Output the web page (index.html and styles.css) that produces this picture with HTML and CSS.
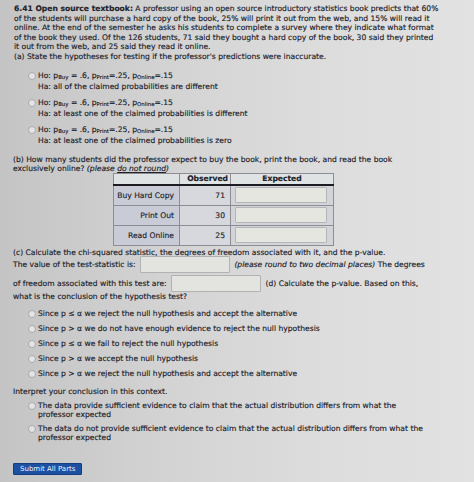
FILE: index.html
```html
<!DOCTYPE html>
<html>
<head>
<meta charset="utf-8">
<link rel="stylesheet" href="styles.css">
</head>
<body>
<div class="page">
  <p class="intro"><b>6.41 Open source textbook:</b> A professor using an open source introductory statistics book predicts that 60%<br>of the students will purchase a hard copy of the book, 25% will print it out from the web, and 15% will read it<br>online. At the end of the semester he asks his students to complete a survey where they indicate what format<br>of the book they used. Of the 126 students, 71 said they bought a hard copy of the book, 30 said they printed<br>it out from the web, and 25 said they read it online.<br>(a) State the hypotheses for testing if the professor's predictions were inaccurate.</p>

  <div class="hypos">
    <label class="hopt"><span class="radio"></span><span class="htext">Ho: p<sub>Buy</sub> = .6, p<sub>Print</sub>=.25, p<sub>Online</sub>=.15<br>Ha: all of the claimed probabilities are different</span></label>
    <label class="hopt"><span class="radio"></span><span class="htext">Ho: p<sub>Buy</sub> = .6, p<sub>Print</sub>=.25, p<sub>Online</sub>=.15<br>Ha: at least one of the claimed probabilities is different</span></label>
    <label class="hopt"><span class="radio"></span><span class="htext">Ho: p<sub>Buy</sub> = .6, p<sub>Print</sub>=.25, p<sub>Online</sub>=.15<br>Ha: at least one of the claimed probabilities is zero</span></label>
  </div>

  <p class="partb">(b) How many students did the professor expect to buy the book, print the book, and read the book<br>exclusively online? <i>(please <u>do not round</u>)</i></p>

  <table class="tbl">
    <thead>
      <tr><th class="c1"></th><th class="c2">Observed</th><th class="c3">Expected</th></tr>
    </thead>
    <tbody>
      <tr><td class="c1">Buy Hard Copy</td><td class="c2">71</td><td class="c3"><span class="box"></span></td></tr>
      <tr><td class="c1">Print Out</td><td class="c2">30</td><td class="c3"><span class="box"></span></td></tr>
      <tr><td class="c1">Read Online</td><td class="c2">25</td><td class="c3"><span class="box"></span></td></tr>
    </tbody>
  </table>

  <div class="partc">
    <div class="line">(c) Calculate the chi-squared statistic, the degrees of freedom associated with it, and the p-value.</div>
    <div class="line">The value of the test-statistic is: <span class="inbox"></span> <i>(please round to two decimal places)</i> The degrees</div>
    <div class="line l3">of freedom associated with this test are: <span class="inbox"></span> (d) Calculate the p-value. Based on this,</div>
    <div class="line">what is the conclusion of the hypothesis test?</div>
  </div>

  <div class="concl">
    <label class="copt"><span class="radio"></span>Since p ≤ α we reject the null hypothesis and accept the alternative</label>
    <label class="copt"><span class="radio"></span>Since p &gt; α we do not have enough evidence to reject the null hypothesis</label>
    <label class="copt"><span class="radio"></span>Since p ≤ α we fail to reject the null hypothesis</label>
    <label class="copt"><span class="radio"></span>Since p &gt; α we accept the null hypothesis</label>
    <label class="copt"><span class="radio"></span>Since p &gt; α we reject the null hypothesis and accept the alternative</label>
  </div>

  <div class="interp">Interpret your conclusion in this context.</div>
  <div class="iopts">
    <label class="hopt"><span class="radio"></span><span class="htext">The data provide sufficient evidence to claim that the actual distribution differs from what the<br>professor expected</span></label>
    <label class="hopt"><span class="radio"></span><span class="htext">The data do not provide sufficient evidence to claim that the actual distribution differs from what the<br>professor expected</span></label>
  </div>

  <button class="submit">Submit All Parts</button>
</div>
</body>
</html>
```

FILE: styles.css
```css
html, body {
  margin: 0;
  padding: 0;
}
body {
  width: 474px;
  height: 482px;
  overflow: hidden;
  background: linear-gradient(90deg, #c4c4c4 0%, #d3d3d3 35%, #dcdcdc 65%, #e2e2e2 100%);
  font-family: "DejaVu Sans", Verdana, sans-serif;
  font-size: 7.6px;
  color: #22222a;
  -webkit-text-stroke: 0.15px #22222a;
}
.page {
  padding: 4px 0 0 13px;
}
p { margin: 0; }
.intro {
  line-height: 9.6px;
  padding-left: 1px;
}
.hypos {
  margin-top: 8px;
  padding-left: 15px;
  display: flex;
  flex-direction: column;
  gap: 5px;
}
.hopt {
  display: flex;
  align-items: flex-start;
  gap: 2px;
  line-height: 11px;
}
.radio {
  flex: none;
  width: 6px;
  height: 6px;
  border: 1px solid #a8aab0;
  border-radius: 50%;
  background: #e4e4e6;
  margin-top: 2px;
  -webkit-text-stroke: 0;
}
sub {
  font-size: 5.4px;
  vertical-align: -1px;
  line-height: 0;
}
.partb {
  margin-top: 9px;
  line-height: 9px;
}
.tbl {
  margin-left: 100px;
  border-collapse: collapse;
  border: 1px solid #8c8e94;
}
.tbl th {
  height: 10px;
  padding: 0 2px;
  font-weight: bold;
  background: #dfe3e3;
  border-bottom: 2px solid #1c1c22;
  border-left: 1px solid #8c8e94;
  text-align: center;
  color: #202028;
}
.tbl td {
  height: 19px;
  padding: 0 5px 0 3px;
  border: 1px solid #8c8e94;
}
.tbl .c1 { width: 57px; text-align: right; }
.tbl td.c1 { background: #c9ccd6; }
.tbl .c2 { width: 42px; text-align: right; }
.tbl td.c2 { background: #d6d8de; }
.tbl .c3 { width: 92px; }
.tbl td.c3 { background: #d2d4da; padding: 0 6px 0 4px; }
.box {
  display: block;
  height: 14px;
  border: 1px solid #b4b6b8;
  border-radius: 1px;
  background: #e6e6e0;
}
.partc {
  margin-top: 1px;
}
.line {
  line-height: 12px;
}
.line.l3 {
  margin-top: 6px;
  line-height: 14px;
}
.inbox {
  display: inline-block;
  vertical-align: middle;
  width: 88px;
  height: 15px;
  border: 1px solid #b0b2b4;
  border-radius: 1px;
  background: #e3e3e0;
  margin: -4px 2px;
}
.concl {
  margin-top: 5px;
  padding-left: 15px;
  display: flex;
  flex-direction: column;
  gap: 4px;
}
.copt {
  display: flex;
  align-items: flex-start;
  gap: 2px;
  line-height: 11px;
}
.interp {
  margin-top: 7px;
  line-height: 11px;
}
.iopts {
  margin-top: 4px;
  padding-left: 15px;
  display: flex;
  flex-direction: column;
  gap: 4px;
}
.iopts .hopt { line-height: 9.6px; }
.iopts .radio { margin-top: 1px; }
.submit {
  margin-top: 20px;
  height: 12px;
  padding: 0 6px;
  background: #1d4fa3;
  color: #f2f4fa;
  -webkit-text-stroke: 0;
  border: 1px solid #163d80;
  border-radius: 1px;
  font-family: "DejaVu Sans", Verdana, sans-serif;
  font-size: 7px;
  line-height: 10px;
}
```
